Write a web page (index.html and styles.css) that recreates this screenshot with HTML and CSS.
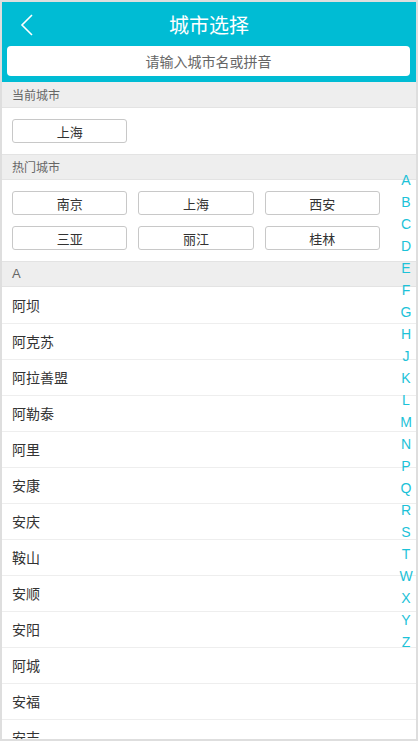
FILE: index.html
```html
<!DOCTYPE html>
<html lang="zh">
<head>
<meta charset="utf-8">
<title>城市选择</title>
<link rel="stylesheet" href="styles.css">
</head>
<body>
<div class="frame">
  <header class="header">
    <div class="title-row">
      <svg class="back" width="14" height="22" viewBox="0 0 14 22"><polyline points="12,1 2,11 12,21" fill="none" stroke="#fff" stroke-width="1.6"/></svg>
      <h1 class="title">城市选择</h1>
    </div>
    <div class="search">请输入城市名或拼音</div>
  </header>

  <div class="section-title">当前城市</div>
  <div class="btn-grid">
    <div class="city-btn">上海</div>
  </div>

  <div class="section-title">热门城市</div>
  <div class="btn-grid">
    <div class="city-btn">南京</div>
    <div class="city-btn">上海</div>
    <div class="city-btn">西安</div>
    <div class="city-btn">三亚</div>
    <div class="city-btn">丽江</div>
    <div class="city-btn">桂林</div>
  </div>

  <div class="section-title latin">A</div>
  <ul class="city-list">
    <li>阿坝</li>
    <li>阿克苏</li>
    <li>阿拉善盟</li>
    <li>阿勒泰</li>
    <li>阿里</li>
    <li>安康</li>
    <li>安庆</li>
    <li>鞍山</li>
    <li>安顺</li>
    <li>安阳</li>
    <li>阿城</li>
    <li>安福</li>
    <li>安吉</li>
  </ul>

  <ul class="index">
    <li>A</li><li>B</li><li>C</li><li>D</li><li>E</li><li>F</li><li>G</li><li>H</li><li>J</li><li>K</li><li>L</li><li>M</li><li>N</li><li>P</li><li>Q</li><li>R</li><li>S</li><li>T</li><li>W</li><li>X</li><li>Y</li><li>Z</li>
  </ul>
</div>
</body>
</html>
```

FILE: styles.css
```css
* { box-sizing: border-box; }
html, body {
  margin: 0;
  padding: 0;
  background: #fff;
}
body {
  font-family: "Liberation Sans", "Noto Sans CJK SC", sans-serif;
}
.frame {
  position: relative;
  width: 418px;
  height: 741px;
  border: 2px solid #dedede;
  overflow: hidden;
  background: #fff;
}
.header {
  background: #00bcd4;
  padding-bottom: 6px;
}
.title-row {
  position: relative;
  height: 44px;
  display: flex;
  align-items: center;
  justify-content: center;
}
.back {
  position: absolute;
  left: 18px;
  top: 12px;
}
.title {
  margin: 0;
  font-size: 20px;
  font-weight: normal;
  color: #fff;
  font-family: "Noto Sans CJK SC", sans-serif;
}
.search {
  margin: 0 6px 0 5px;
  height: 30px;
  background: #fff;
  border-radius: 4px;
  display: flex;
  align-items: center;
  justify-content: center;
  font-size: 14px;
  color: #666;
  font-family: "Noto Sans CJK SC", sans-serif;
}
.section-title {
  height: 26px;
  line-height: 24px;
  background: #eeeeee;
  border-top: 1px solid #e3e3e3;
  border-bottom: 1px solid #e3e3e3;
  padding-left: 10px;
  font-size: 12px;
  color: #666;
  font-family: "Noto Sans CJK SC", sans-serif;
}
.header + .section-title { border-top: none; line-height: 25px; }
.section-title.latin {
  font-family: "Liberation Sans", sans-serif;
  font-size: 13px;
}
.btn-grid {
  display: grid;
  grid-template-columns: repeat(3, 1fr);
  gap: 11px;
  padding: 11px 36px 11px 10px;
}
.city-btn {
  height: 24px;
  border: 1px solid #c8c8c8;
  border-radius: 3px;
  display: flex;
  align-items: center;
  justify-content: center;
  font-size: 13px;
  color: #333;
  font-family: "Noto Sans CJK SC", sans-serif;
}
.city-list {
  list-style: none;
  margin: 1px 0 0;
  padding: 0;
}
.city-list li {
  height: 36px;
  line-height: 35px;
  border-bottom: 1px solid #eeeeee;
  padding-left: 10px;
  font-size: 14px;
  color: #333;
  font-family: "Noto Sans CJK SC", sans-serif;
}
.index {
  position: absolute;
  right: 0;
  top: 167px;
  width: 20px;
  list-style: none;
  margin: 0;
  padding: 0;
}
.index li {
  height: 22px;
  line-height: 22px;
  text-align: center;
  font-size: 14px;
  color: #1cc2d8;
  font-family: "Liberation Sans", sans-serif;
}
```
